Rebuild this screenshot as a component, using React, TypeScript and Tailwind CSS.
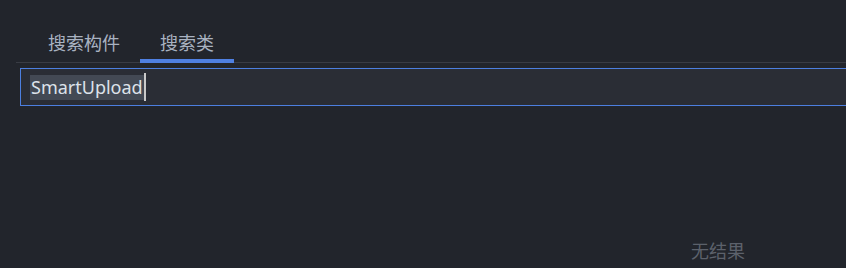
import { useState } from "react";

const tabs = ["搜索构件", "搜索类"];

export default function App() {
  const [active, setActive] = useState(1);

  return (
    <div
      className="h-[268px] w-full overflow-hidden bg-[#22252c]"
      style={{ fontFamily: '"Noto Sans", "Noto Sans CJK SC", sans-serif' }}
    >
      <div className="w-[1416px]">
        <div className="ml-4 pt-[31px]">
          <div className="flex border-b border-[#393c44] pl-3">
            {tabs.map((tab, i) => (
              <button
                key={tab}
                type="button"
                onClick={() => setActive(i)}
                className={`-mb-px border-b-4 px-5 pb-1 text-[18px] leading-6 text-[#a9b2c1] ${
                  i === active ? "border-[#4f80e2]" : "border-transparent"
                }`}
              >
                {tab}
              </button>
            ))}
          </div>
        </div>

        <div className="ml-5 mt-[5px] flex h-[38px] items-center border border-[#4c7fe0] bg-[#2a2d35] pl-[9px]">
          <span className="bg-[#434954] px-px text-[18px] leading-[25px] text-[#dde2ea]">
            SmartUpload
          </span>
          <span className="h-[28px] w-[2px] bg-[#c9c9c9]" />
        </div>

        <div className="ml-5 flex h-[162px] items-end justify-center pb-[5px]">
          <span className="text-[18px] leading-6 text-[#5c616b]">无结果</span>
        </div>
      </div>
    </div>
  );
}
